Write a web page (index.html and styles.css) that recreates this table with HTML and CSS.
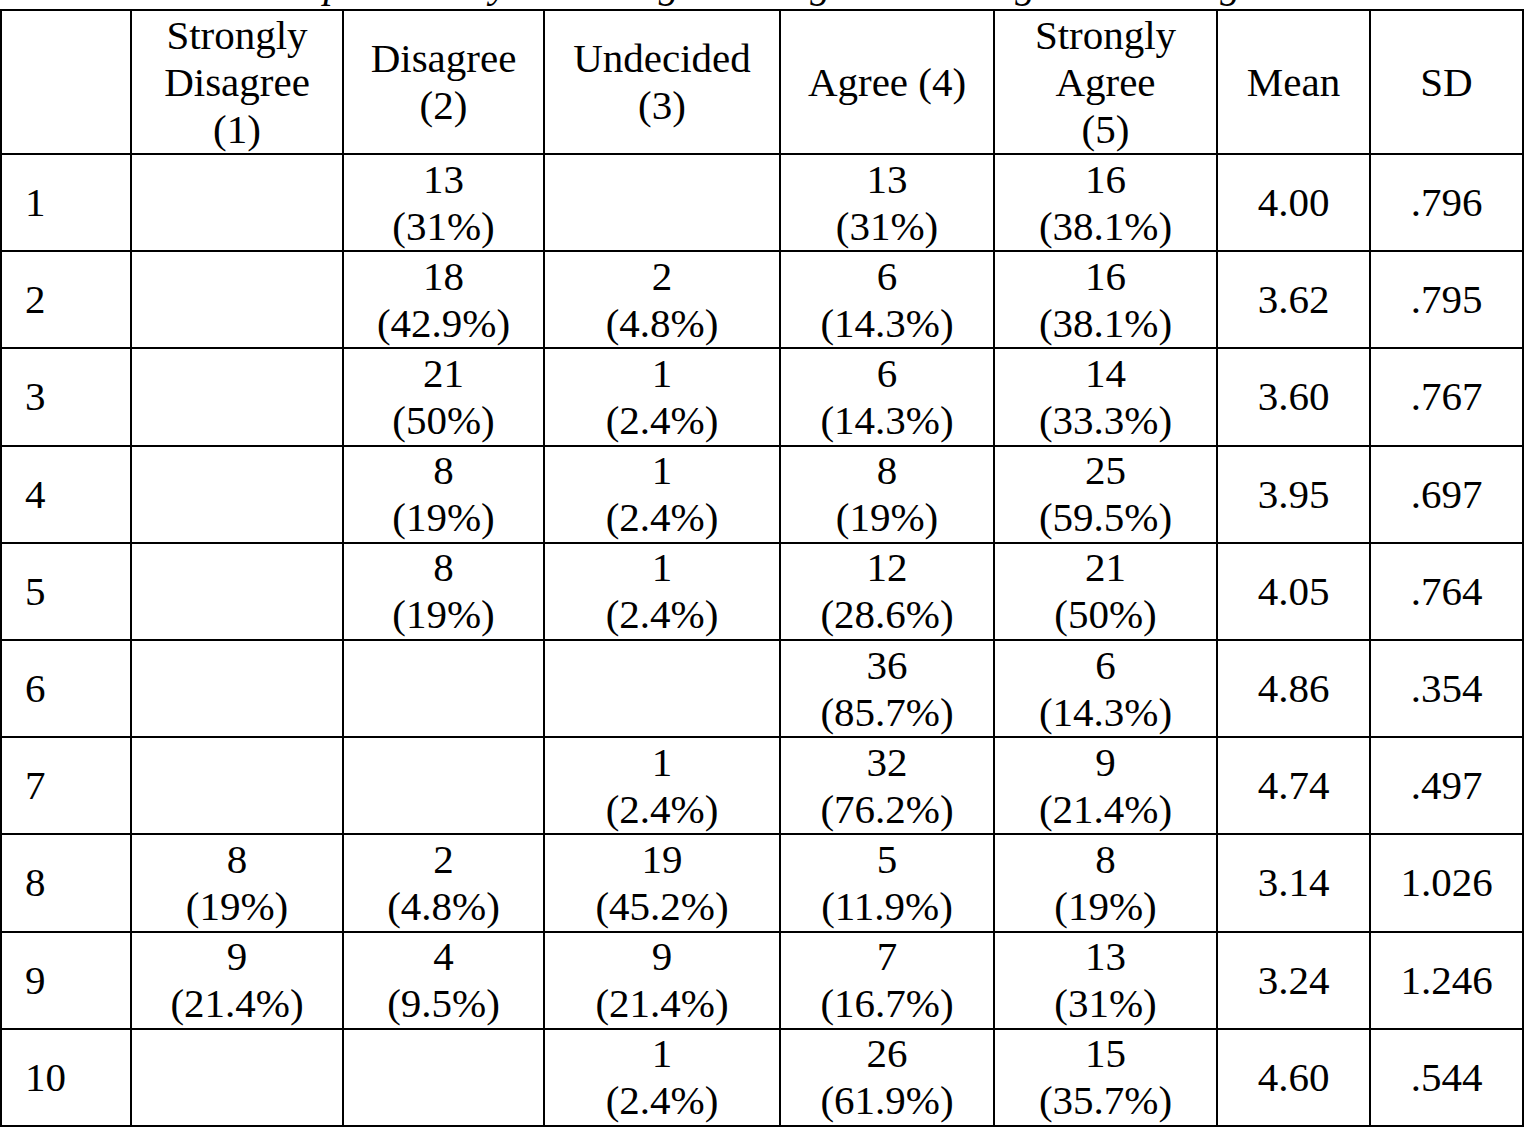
FILE: index.html
```html
<!DOCTYPE html>
<html lang="en">
<head>
<meta charset="utf-8">
<title>Descriptive Analysis</title>
<link rel="stylesheet" href="styles.css">
</head>
<body>
<div class="page">
  <p class="caption">Table 2: Descriptive Analysis on English Songs in Reading and Writing</p>
  <table class="results">
    <colgroup>
      <col class="c-item">
      <col class="c-sd1">
      <col class="c-d2">
      <col class="c-u3">
      <col class="c-a4">
      <col class="c-sa5">
      <col class="c-mean">
      <col class="c-sd">
    </colgroup>
    <thead>
      <tr class="head">
        <th></th>
        <th>Strongly<br>Disagree<br>(1)</th>
        <th>Disagree<br>(2)</th>
        <th>Undecided<br>(3)</th>
        <th>Agree (4)</th>
        <th>Strongly<br>Agree<br>(5)</th>
        <th>Mean</th>
        <th>SD</th>
      </tr>
    </thead>
    <tbody>
      <tr><td class="item">1</td><td></td><td>13<br>(31%)</td><td></td><td>13<br>(31%)</td><td>16<br>(38.1%)</td><td>4.00</td><td>.796</td></tr>
      <tr><td class="item">2</td><td></td><td>18<br>(42.9%)</td><td>2<br>(4.8%)</td><td>6<br>(14.3%)</td><td>16<br>(38.1%)</td><td>3.62</td><td>.795</td></tr>
      <tr><td class="item">3</td><td></td><td>21<br>(50%)</td><td>1<br>(2.4%)</td><td>6<br>(14.3%)</td><td>14<br>(33.3%)</td><td>3.60</td><td>.767</td></tr>
      <tr><td class="item">4</td><td></td><td>8<br>(19%)</td><td>1<br>(2.4%)</td><td>8<br>(19%)</td><td>25<br>(59.5%)</td><td>3.95</td><td>.697</td></tr>
      <tr><td class="item">5</td><td></td><td>8<br>(19%)</td><td>1<br>(2.4%)</td><td>12<br>(28.6%)</td><td>21<br>(50%)</td><td>4.05</td><td>.764</td></tr>
      <tr><td class="item">6</td><td></td><td></td><td></td><td>36<br>(85.7%)</td><td>6<br>(14.3%)</td><td>4.86</td><td>.354</td></tr>
      <tr><td class="item">7</td><td></td><td></td><td>1<br>(2.4%)</td><td>32<br>(76.2%)</td><td>9<br>(21.4%)</td><td>4.74</td><td>.497</td></tr>
      <tr><td class="item">8</td><td>8<br>(19%)</td><td>2<br>(4.8%)</td><td>19<br>(45.2%)</td><td>5<br>(11.9%)</td><td>8<br>(19%)</td><td>3.14</td><td>1.026</td></tr>
      <tr><td class="item">9</td><td>9<br>(21.4%)</td><td>4<br>(9.5%)</td><td>9<br>(21.4%)</td><td>7<br>(16.7%)</td><td>13<br>(31%)</td><td>3.24</td><td>1.246</td></tr>
      <tr><td class="item">10</td><td></td><td></td><td>1<br>(2.4%)</td><td>26<br>(61.9%)</td><td>15<br>(35.7%)</td><td>4.60</td><td>.544</td></tr>
    </tbody>
  </table>
</div>
</body>
</html>
```

FILE: styles.css
```css
html, body {
  margin: 0;
  padding: 0;
  background: #fff;
}

body {
  font-family: "Liberation Serif", "Times New Roman", serif;
  color: #000;
  overflow: hidden;
}

.page {
  width: 1536px;
  height: 1136px;
  overflow: hidden;
}

.caption {
  margin: -40px 0 2px 0;
  height: 47px;
  font-size: 41px;
  line-height: 47px;
  font-style: italic;
  text-align: left;
  white-space: nowrap;
  padding-left: 70px;
}

.results {
  border-collapse: collapse;
  table-layout: fixed;
  width: 1522px;
  font-size: 41px;
  line-height: 47px;
}

.c-item { width: 130px; }
.c-sd1 { width: 212px; }
.c-d2 { width: 201px; }
.c-u3 { width: 236px; }
.c-a4 { width: 214px; }
.c-sa5 { width: 223px; }
.c-mean { width: 153px; }
.c-sd { width: 153px; }

.results th,
.results td {
  border: 2px solid #000;
  padding: 0 4px;
  text-align: center;
  vertical-align: middle;
  font-weight: normal;
}

.results .head {
  height: 144px;
}

.results tbody tr {
  height: 97.2px;
}

.results td.item {
  text-align: left;
  padding-left: 23px;
}
```
